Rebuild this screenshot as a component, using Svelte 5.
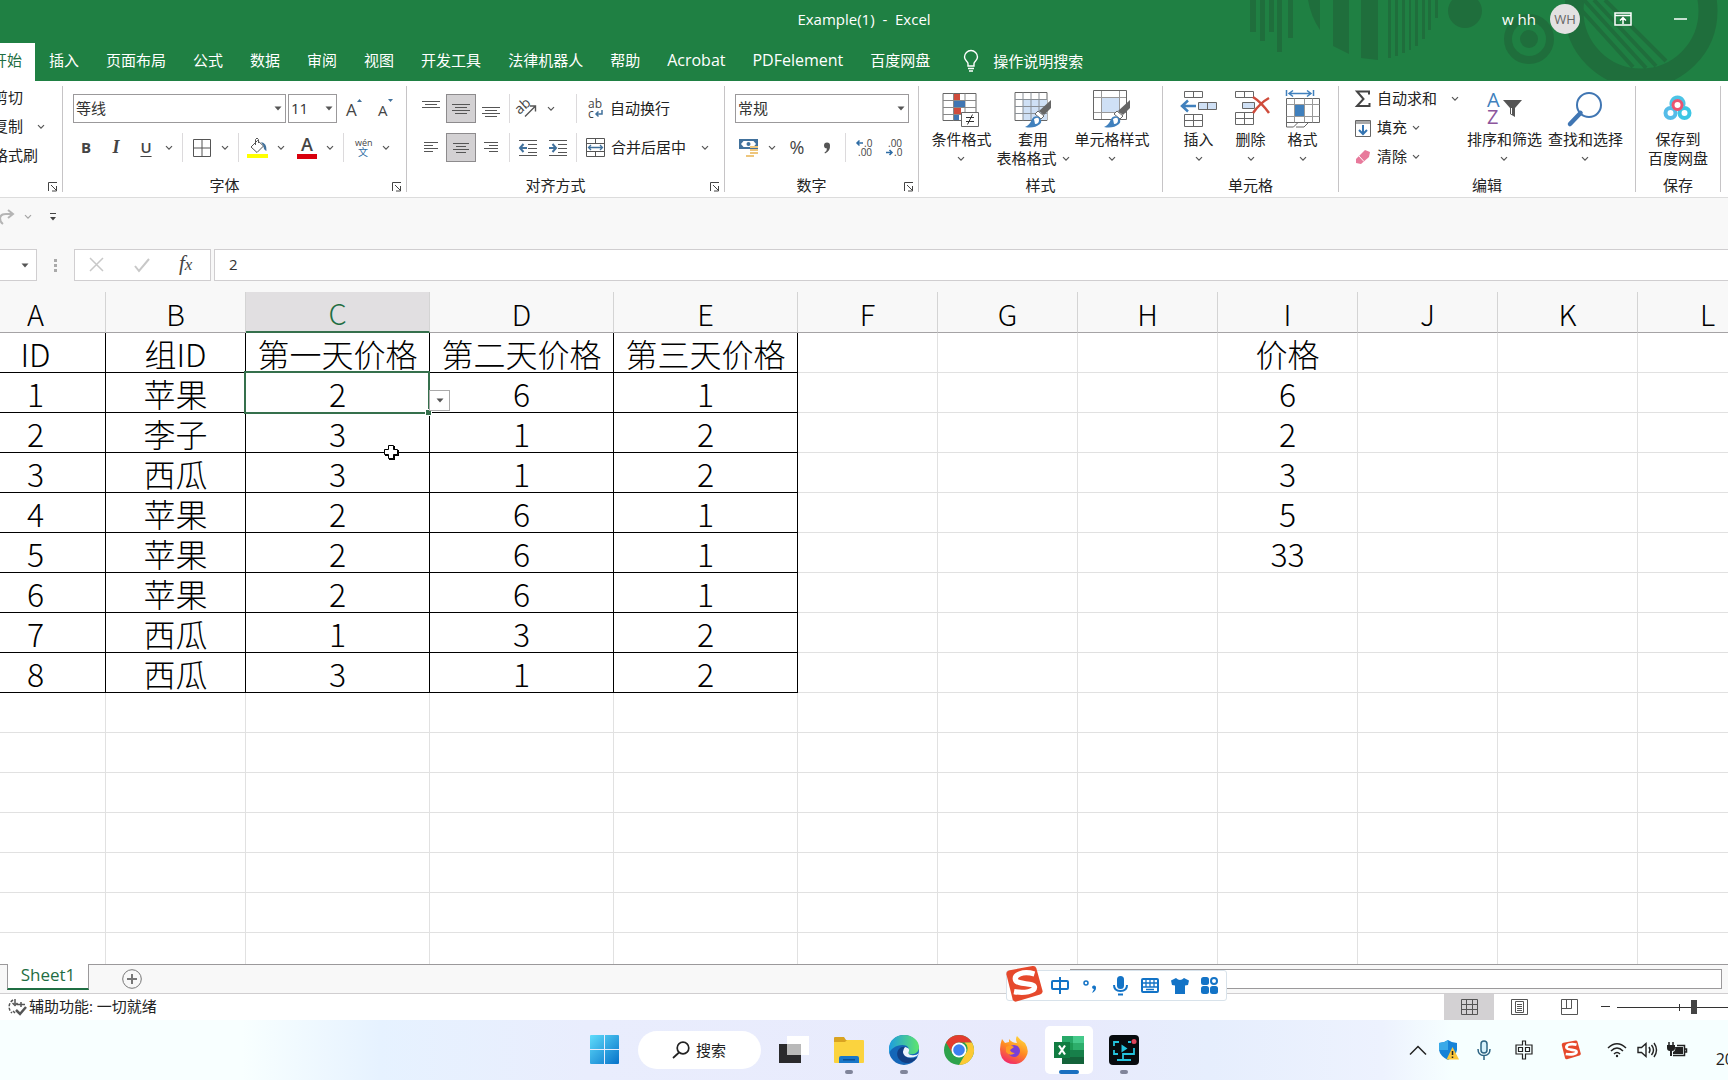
<script>
  const tabs = [
    '开始', '插入', '页面布局', '公式', '数据', '审阅', '视图', '开发工具',
    '法律机器人', '帮助', 'Acrobat', 'PDFelement', '百度网盘'
  ];

  const columns = ['A', 'B', 'C', 'D', 'E', 'F', 'G', 'H', 'I', 'J', 'K', 'L'];

  const data = [
    ['ID', '组ID', '第一天价格', '第二天价格', '第三天价格', '', '', '', '价格'],
    ['1', '苹果', '2', '6', '1', '', '', '', '6'],
    ['2', '李子', '3', '1', '2', '', '', '', '2'],
    ['3', '西瓜', '3', '1', '2', '', '', '', '3'],
    ['4', '苹果', '2', '6', '1', '', '', '', '5'],
    ['5', '苹果', '2', '6', '1', '', '', '', '33'],
    ['6', '苹果', '2', '6', '1'],
    ['7', '西瓜', '1', '3', '2'],
    ['8', '西瓜', '3', '1', '2']
  ];
  const rows = Array.from({ length: 16 }, (_, r) =>
    columns.map((_, c) => data[r]?.[c] ?? '')
  );

  let activeTab = $state('开始');
  let selected = $state({ row: 1, col: 2 });
  let formula = $state('2');
  let zoom = $state(63);

  function select(row, col) {
    selected = { row, col };
    formula = rows[row][col];
  }
</script>

{#snippet chev()}
  <svg class="chev" width="8" height="6" viewBox="0 0 8 6"><path d="M1 1.2l3 3 3-3" fill="none" stroke="#555" stroke-width="1.2" /></svg>
{/snippet}

{#snippet caret()}
  <svg class="caret" width="8" height="5" viewBox="0 0 8 5"><path d="M0.5 0.5h7l-3.5 4z" fill="#555" /></svg>
{/snippet}

{#snippet launcher()}
  <button class="launcher" aria-label="对话框启动器">
    <svg width="10" height="10" viewBox="0 0 10 10"><path d="M0.5 9V0.5H9M3 3l5 5M8.5 4v5H4" fill="none" stroke="#444" /></svg>
  </button>
{/snippet}

{#snippet lines(list)}
  <svg width="18" height="18" viewBox="0 0 18 18" stroke="#555">
    {#each list as [x1, x2, y]}<path d="M{x1} {y}H{x2}" />{/each}
  </svg>
{/snippet}

{#snippet sogou(size)}
  <svg width={size} height={size} viewBox="0 0 40 40">
    <path d="M5 5.500L29 1q3-.5 4 2.500L39.500 27q.5 3-2.500 4L12 38.500q-3 .5-4-2.500L1.500 10q-.5-3.500 3.500-4.500z" fill="#e6492c" />
    <path d="M31 9.500C19 6 9.500 10 11 15.500c1.500 5.500 19 3 20 7.500C32 28 20 30 9.500 28" fill="none" stroke="#fff" stroke-width="5.500" />
  </svg>
{/snippet}

<div class="app">
  <header>
    <svg class="art" width="528" height="80" viewBox="0 0 528 80" fill="#1f6e3c">
      <path d="M50 0h6v32h-6zM60 0h5v41h-5zM69 0h5v32h-5zM77 0h5v52h-5zM88 0h5v38h-5z" />
      <path d="M108 0h12v30q-9-13-12-30zM133 0h16v54l-16-8zM161 0h17v60l-17-2z" />
      <path d="M188 0h3v58h-3zM195 0h3v56h-3zM202 0h3v53h-3zM209 0h2v50h-2zM215 0h3v46h-3zM222 0h3v39h-3zM228 0h3v30h-3zM235 0h3v18h-3z" />
      <circle cx="265" cy="11" r="17" />
      <circle cx="329" cy="39" r="21" fill="none" stroke="#1f6e3c" stroke-width="8" />
      <circle cx="329" cy="39" r="9" />
      <circle cx="441" cy="11" r="67" fill="none" stroke="#1f6e3c" stroke-width="19" />
      <path d="M375 3l58 64M384 0l62 68M394 0l62 66M405 0l61 61" stroke="#1f6e3c" stroke-width="4" />
    </svg>
    <div class="titlebar">
      <span></span>
      <h1>Example(1)&nbsp; -&nbsp; Excel</h1>
      <div class="account">
        <span class="who">w hh</span>
        <span class="avatar">WH</span>
        <button aria-label="功能区显示选项">
          <svg width="18" height="14" viewBox="0 0 18 14" fill="none" stroke="#fff" stroke-width="1.500"><path d="M1 1h16v12H1zM1 3.500h16M9 12V6M6 8.500l3-3 3 3" /></svg>
        </button>
        <button aria-label="最小化">
          <svg width="14" height="14" viewBox="0 0 14 14"><path d="M0 7h13" stroke="#fff" stroke-width="1.500" /></svg>
        </button>
      </div>
    </div>
    <nav class="tabs">
      {#each tabs as t}
        <button class:active={t === activeTab} class:latin={/^[A-Z]/.test(t)} onclick={() => (activeTab = t)}>{t}</button>
      {/each}
      <button class="tell">
        <svg width="16" height="22" viewBox="0 0 16 22" fill="none" stroke="#fff" stroke-width="1.400"><path d="M5 16v-2.500C5 11.500 1.500 10.500 1.500 7a6.500 6.500 0 0 1 13 0c0 3.500-3.500 4.500-3.500 6.500V16zM5 18.500h6M6 21h4" /></svg>
        操作说明搜索
      </button>
    </nav>
  </header>

  <section class="ribbon">
    <div class="group clip">
      <div class="stack">
        <button>剪切</button>
        <button>复制 {@render chev()}</button>
        <button>格式刷</button>
      </div>
      {@render launcher()}
    </div>

    <div class="group font">
      <div class="row inputs">
        <label class="pick wide">
          <select aria-label="字体"><option>等线</option></select>{@render caret()}
        </label>
        <label class="pick small">
          <select aria-label="字号"><option>11</option></select>{@render caret()}
        </label>
        <button class="ib" aria-label="增大字号">
          <svg width="18" height="20" viewBox="0 0 18 20"><text x="1" y="17" font-size="17" fill="#444">A</text><path d="M12 3h5l-2.500-3z" fill="#41719c" /></svg>
        </button>
        <button class="ib" aria-label="减小字号">
          <svg width="18" height="20" viewBox="0 0 18 20"><text x="1" y="17" font-size="15" fill="#444">A</text><path d="M11 0h5l-2.500 3z" fill="#41719c" /></svg>
        </button>
      </div>
      <div class="row">
        <button class="ib b">B</button>
        <button class="ib i">I</button>
        <button class="ib u">U</button>
        <button class="cb" aria-label="下划线选项">{@render chev()}</button>
        <i class="sep"></i>
        <button class="ib" aria-label="边框">
          <svg width="18" height="18" viewBox="0 0 18 18"><path d="M.5.5h17v17H.5zM9 .5v17M.5 9h17" fill="none" stroke="#555" /></svg>
        </button>
        <button class="cb" aria-label="边框选项">{@render chev()}</button>
        <i class="sep"></i>
        <button class="ib" aria-label="填充颜色">
          <svg width="22" height="22" viewBox="0 0 22 22"><path d="M4 10l6.500-6.500L16.500 9 10 15.500zM8.500 8V2.500q1.500-3 3 0V6" fill="#fff" stroke="#555" /><path d="M14 5q6 1 5.500 9-3-1-3-5z" fill="#41719c" /><path d="M0 17h21v4H0z" fill="#ff0" /></svg>
        </button>
        <button class="cb" aria-label="填充颜色选项">{@render chev()}</button>
        <button class="ib gap" aria-label="字体颜色">
          <svg width="20" height="22" viewBox="0 0 20 22"><text x="4" y="14" font-size="18" font-weight="600" fill="#444">A</text><path d="M0 17h20v5H0z" fill="#d9000d" /></svg>
        </button>
        <button class="cb" aria-label="字体颜色选项">{@render chev()}</button>
        <i class="sep"></i>
        <button class="ib" aria-label="拼音指南">
          <svg width="18" height="20" viewBox="0 0 18 20"><text x="1" y="8" font-size="9" fill="#444">wén</text><text x="4" y="18" font-size="10" fill="#2e6ca4">文</text></svg>
        </button>
        <button class="cb" aria-label="拼音选项">{@render chev()}</button>
      </div>
      <span class="name">字体</span>
      {@render launcher()}
    </div>

    <div class="group align">
      <div class="row">
        <button class="ib" aria-label="顶端对齐">{@render lines([[0, 18, 1.5], [3, 15, 4.5], [0, 18, 7.5]])}</button>
        <button class="ib on" aria-label="垂直居中">{@render lines([[0, 18, 4.5], [3, 15, 7.5], [0, 18, 10.5], [3, 15, 13.5]])}</button>
        <button class="ib" aria-label="底端对齐">{@render lines([[0, 18, 7.5], [3, 15, 10.5], [0, 18, 13.5], [3, 15, 16.5]])}</button>
        <i class="sep"></i>
        <button class="ib" aria-label="方向">
          <svg width="20" height="20" viewBox="0 0 20 20"><text x="0" y="12" font-size="14" fill="#444" transform="rotate(-42 6 12)">ab</text><path d="M7 17.500l10-10M12 7h5.500v5.500" fill="none" stroke="#555" stroke-width="1.400" /></svg>
        </button>
        <button class="cb" aria-label="方向选项">{@render chev()}</button>
        <i class="sep far"></i>
        <button class="tb">
          <svg width="18" height="20" viewBox="0 0 18 20"><text x="2" y="9" font-size="12" fill="#444">ab</text><text x="2" y="19" font-size="12" fill="#444">c</text><path d="M16 11v4h-6M12.500 12.500L10 15l2.500 2.500" fill="none" stroke="#41719c" stroke-width="1.500" /></svg>
          自动换行
        </button>
      </div>
      <div class="row">
        <button class="ib" aria-label="左对齐">{@render lines([[2, 16, 3.5], [2, 11, 6.5], [2, 16, 9.5], [2, 11, 12.5]])}</button>
        <button class="ib on" aria-label="居中">{@render lines([[1, 17, 4.5], [4, 14, 7.5], [1, 17, 10.5], [4, 14, 13.5]])}</button>
        <button class="ib" aria-label="右对齐">{@render lines([[2, 16, 3.5], [7, 16, 6.5], [2, 16, 9.5], [7, 16, 12.5]])}</button>
        <i class="sep"></i>
        <button class="ib" aria-label="减少缩进量">
          <svg width="18" height="18" viewBox="0 0 18 18"><path d="M0 1.500h18M9 5.500h9M9 9.500h9M9 13.500h9M0 16.500h18" stroke="#555" /><path d="M8 9H1M4.500 5L1 9l3.500 4" fill="none" stroke="#41719c" stroke-width="2" /></svg>
        </button>
        <button class="ib" aria-label="增加缩进量">
          <svg width="18" height="18" viewBox="0 0 18 18"><path d="M0 1.500h18M9 5.500h9M9 9.500h9M9 13.500h9M0 16.500h18" stroke="#555" /><path d="M0 9h7M3.500 5L7 9l-3.500 4" fill="none" stroke="#41719c" stroke-width="2" /></svg>
        </button>
        <i class="sep"></i>
        <button class="tb">
          <svg width="19" height="19" viewBox="0 0 19 19" fill="none"><path d="M.5.5h18v18H.5zM.5 5.500h18M.5 13.500h18M9.500.5v5M9.500 13.500v5" stroke="#555" /><path d="M2.500 9.500h14M5 7L2.500 9.500 5 12M14 7l2.500 2.500L14 12" stroke="#41719c" stroke-width="1.300" /></svg>
          合并后居中
        </button>
        <button class="cb merge" aria-label="合并选项">{@render chev()}</button>
      </div>
      <span class="name">对齐方式</span>
      {@render launcher()}
    </div>

    <div class="group number">
      <div class="row">
        <label class="pick format">
          <select aria-label="数字格式"><option>常规</option></select>{@render caret()}
        </label>
      </div>
      <div class="row">
        <button class="ib" aria-label="会计数字格式">
          <svg width="20" height="20" viewBox="0 0 20 20"><path d="M0 1h19v10H0z" fill="#41719c" /><path d="M2 6l2.500-3h10L17 6l-2.500 3h-10z" fill="#fff" /><circle cx="9.500" cy="6" r="2" fill="#41719c" /><path d="M11 9h8M11 12h8M11 15h8M7 18h8" stroke="#eec67c" stroke-width="2" /></svg>
        </button>
        <button class="cb" aria-label="会计格式选项">{@render chev()}</button>
        <button class="ib pct">%</button>
        <button class="ib" aria-label="千位分隔">
          <svg width="8" height="12" viewBox="0 0 8 12"><path d="M1 3.500a2.800 2.800 0 0 1 6 0Q7.500 9 2 11.500L1.500 10.500Q4 9 4 6.500 1 6.500 1 3.500z" fill="#555" /></svg>
        </button>
        <i class="sep"></i>
        <button class="ib" aria-label="增加小数位数">
          <svg width="18" height="20" viewBox="0 0 18 20"><text x="9" y="9" font-size="10" fill="#444">.0</text><text x="3" y="18" font-size="10" fill="#444">.00</text><path d="M8 5H2M4.500 2.500L2 5l2.500 2.500" fill="none" stroke="#2e6ca4" stroke-width="1.500" /></svg>
        </button>
        <button class="ib" aria-label="减少小数位数">
          <svg width="18" height="20" viewBox="0 0 18 20"><text x="3" y="9" font-size="10" fill="#444">.00</text><text x="9" y="18" font-size="10" fill="#444">.0</text><path d="M1 14.500h6M4.500 12L7 14.500 4.500 17" fill="none" stroke="#2e6ca4" stroke-width="1.500" /></svg>
        </button>
      </div>
      <span class="name">数字</span>
      {@render launcher()}
    </div>

    <div class="group styles">
      <div class="bigs">
        <button class="big">
          <svg width="38" height="38" viewBox="0 0 38 38"><path d="M1 2.500h33v27H1z" fill="#fff" stroke="#666" /><path d="M1 9.500h33M1 16.500h33M1 23.500h33M11.500 2.500v27M23 2.500v27" stroke="#888" /><path d="M12 3h6v6h-6zM12 17h7v6h-7z" fill="#cf4c3c" /><path d="M12 10h11v6H12zM12 24h5v5h-5z" fill="#4076b3" /><path d="M19.500 21.500h17v14h-17z" fill="#fff" stroke="#666" /><path d="M24 26.500h8M24 30.500h8M30.500 23.500l-5 10" stroke="#333" /></svg>
          <span>条件格式</span>
          {@render chev()}
        </button>
        <button class="big">
          <svg width="38" height="38" viewBox="0 0 38 38"><path d="M1 1.500h32v28H1z" fill="#fff" stroke="#666" /><path d="M9 9h24v20H9z" fill="#cfe0f5" /><path d="M1 8.500h32M1 15.500h32M1 22.500h32M9 1.500v28M17 1.500v28M25 1.500v28" stroke="#8a9097" /><path d="M37 9v8l-7 7-5-4z" fill="#666" /><path d="M24 20l6 5-3 3-6-5z" fill="#fff" stroke="#666" /><path d="M11 36q5-2 7-8 2-4 7-2 4 4 1 7-6 5-15 3z" fill="#4080bd" /><path d="M20 28q5-3 5 1t-4 4z" fill="#fff" /></svg>
          <span>套用</span>
          <span class="line2">表格格式 {@render chev()}</span>
        </button>
        <button class="big">
          <svg width="38" height="38" viewBox="0 0 38 38"><path d="M.5-.5h33v29H.5z" fill="#fff" stroke="#666" /><path d="M1 6.500h32M1 21.500h32M8.500 0v28M26.500 0v28" stroke="#999" /><path d="M9 7h17v14H9z" fill="#cfe0f5" /><path d="M37 9v8l-7 7-5-4z" fill="#666" /><path d="M24 20l6 5-3 3-6-5z" fill="#fff" stroke="#666" /><path d="M11 36q5-2 7-8 2-4 7-2 4 4 1 7-6 5-15 3z" fill="#4080bd" /><path d="M20 28q5-3 5 1t-4 4z" fill="#fff" /></svg>
          <span>单元格样式</span>
          {@render chev()}
        </button>
      </div>
      <span class="name">样式</span>
    </div>

    <div class="group cells">
      <div class="bigs">
        <button class="big">
          <svg width="38" height="38" viewBox="0 0 38 38" fill="#fff" stroke="#666"><path d="M4.500.5h18v6h-18zM13.500.5v6M4.500 23.500h18v12h-18zM4.500 29.500h18M13.500 23.500v12" /><path d="M18.500 11.500h18v7h-18zM27.500 11.500v7" fill="#cfe0f5" /><path d="M2 15h14M8 9.500L2 15l6 5.500" fill="none" stroke="#4080bd" stroke-width="2.500" /></svg>
          <span>插入</span>
          {@render chev()}
        </button>
        <button class="big">
          <svg width="38" height="38" viewBox="0 0 38 38" fill="#fff" stroke="#666"><path d="M3.500.5h18v6h-18zM12.500.5v6M3.500 21.500h18v12h-18zM3.500 27.500h18M12.500 21.500v12" /><path d="M10.500 11.500h12v6h-12z" fill="#cfe0f5" /><path d="M21 6q8 5 16 16M37 7Q28 12 21 22" fill="none" stroke="#cf4c3c" stroke-width="2.500" /></svg>
          <span>删除</span>
          {@render chev()}
        </button>
        <button class="big">
          <svg width="38" height="38" viewBox="0 0 38 38" fill="#fff" stroke="#666"><path d="M2.500 7.500h33v24h-33z" /><path d="M2.500 13.500h33M2.500 25.500h33M10.500 7.500v24M20.500 7.500v24M28.500 7.500v24" stroke="#999" /><path d="M11 14h9v11h-9z" fill="#4080bd" stroke="none" /><path d="M2.500 31v5h7l4-4M12 36h8l4-4" fill="none" /><path d="M2.500-1v6M29.500-1v6M5 2.500h22M9-.5L5 2.500l4 3M23-.5l4 3-4 3" fill="none" stroke="#4080bd" stroke-width="1.500" /></svg>
          <span>格式</span>
          {@render chev()}
        </button>
      </div>
      <span class="name">单元格</span>
    </div>

    <div class="group edit">
      <div class="stack">
        <button class="sum">
          <svg width="16" height="18" viewBox="0 0 16 18"><path d="M14 4.500V1.500H2l6.500 7.500L2 16h12.500v-3" fill="none" stroke="#444" stroke-width="2" /></svg>
          <span>自动求和</span>{@render chev()}
        </button>
        <button>
          <svg width="16" height="18" viewBox="0 0 16 18"><path d="M.5 1.500h15v16H.5z" fill="#fff" stroke="#666" /><path d="M1 2h14v3H1z" fill="#aaa" /><path d="M8 6v9M4 11l4 4 4-4" fill="none" stroke="#3273b1" stroke-width="2" /></svg>
          <span>填充</span>{@render chev()}
        </button>
        <button>
          <svg width="16" height="18" viewBox="0 0 16 18"><path d="M1 11l9-9 5 2-1 5-8 7-5-1z" fill="#e8799b" /><path d="M4 8l5 5.500" stroke="#fff" /></svg>
          <span>清除</span>{@render chev()}
        </button>
      </div>
      <div class="bigs">
        <button class="big">
          <svg width="38" height="38" viewBox="0 0 38 38"><text x="2" y="16" font-size="20" fill="#4080bd">A</text><text x="2" y="33" font-size="20" fill="#8c569c">Z</text><path d="M18 9h19l-7 8v9l-5-3v-6z" fill="#555" /><path d="M26.500 17v6" stroke="#fff" /></svg>
          <span>排序和筛选</span>
          {@render chev()}
        </button>
        <button class="big">
          <svg width="38" height="38" viewBox="0 0 38 38"><circle cx="23" cy="14" r="12" fill="#fff" stroke="#4076b3" stroke-width="2" /><path d="M14.500 22L4 33" stroke="#4076b3" stroke-width="4.500" stroke-linecap="round" /></svg>
          <span>查找和选择</span>
          {@render chev()}
        </button>
      </div>
      <span class="name">编辑</span>
    </div>

    <div class="group save">
      <div class="bigs">
        <button class="big">
          <svg width="38" height="38" viewBox="0 0 38 38" fill="none" stroke-width="4"><circle cx="11.500" cy="22" r="5" stroke="#55bce8" /><circle cx="25.500" cy="22" r="5" stroke="#3cc6e4" /><path d="M13 15a6 6 0 1 1 11 0" stroke="#4cc4e6" /><circle cx="18.500" cy="14" r="4.500" stroke="#ea5470" stroke-width="3" /></svg>
          <span>保存到</span>
          <span>百度网盘</span>
        </button>
      </div>
      <span class="name">保存</span>
    </div>
  </section>

  <div class="quick">
    <button aria-label="恢复"><svg width="14" height="16" viewBox="0 0 14 16" fill="none" stroke="#b5b5b5" stroke-width="2"><path d="M0 10q0-5 6-5h6M8 1l5 4-5 4M0 9q0 4 3 6" /></svg></button>
    <span class="dim">{@render chev()}</span>
    <button aria-label="自定义快速访问工具栏"><svg width="8" height="8" viewBox="0 0 8 8"><path d="M1 .5h6" stroke="#444" /><path d="M1 4h6L4 7.500z" fill="#444" /></svg></button>
  </div>

  <div class="formula">
    <button class="namebox" aria-label="名称框">{@render caret()}</button>
    <span class="dots"></span>
    <div class="fxbox">
      <button aria-label="取消"><svg width="16" height="16" viewBox="0 0 16 16"><path d="M1 1l13 13M14 1L1 14" stroke="#c8c8c8" stroke-width="1.500" /></svg></button>
      <button aria-label="输入"><svg width="16" height="16" viewBox="0 0 16 16"><path d="M1 9l4 5L15 2" fill="none" stroke="#c8c8c8" stroke-width="2" /></svg></button>
      <button class="fx">f<small>x</small></button>
    </div>
    <input aria-label="编辑栏" bind:value={formula} />
  </div>

  <main>
    <table>
      <colgroup>
        {#each columns as c}
          <col class:price={c === 'C' || c === 'D' || c === 'E'} />
        {/each}
      </colgroup>
      <thead>
        <tr>
          {#each columns as c, i}
            <th class:on={i === selected.col}>{c}</th>
          {/each}
        </tr>
      </thead>
      <tbody>
        {#each rows as row, r}
          <tr>
            {#each row as value, c}
              <td class:boxed={r < 9 && c < 5} onclick={() => select(r, c)}>
                {value}
                {#if r === selected.row && c === selected.col}
                  <span class="ring"></span>
                  <button class="drop" aria-label="下拉列表">{@render caret()}</button>
                {/if}
              </td>
            {/each}
          </tr>
        {/each}
      </tbody>
    </table>
    <svg class="cursor" width="16" height="17" viewBox="0 0 16 17"><path d="M6 2h6v4h4v6h-4v4H6v-4H2V6h4z" fill="#000" /><path d="M5.500 1.500h5v4h4v5h-4v4h-5v-4h-4v-5h4z" fill="#fff" stroke="#000" /></svg>
  </main>

  <div class="sheets">
    <button class="sheet">Sheet1</button>
    <button class="add" aria-label="新工作表"><svg width="20" height="20" viewBox="0 0 20 20" fill="none" stroke="#777"><circle cx="10" cy="10" r="9.300" /><path d="M10 5v10M5 10h10" stroke-width="2" /></svg></button>
    <div class="scroll"></div>
  </div>

  <div class="status">
    <svg width="20" height="20" viewBox="0 0 20 20" fill="none" stroke="#555" stroke-width="1.500"><path d="M6 3a8 8 0 0 0-1 13" stroke-dasharray="3 1.500" /><path d="M8 2v5M5.500 6L8 8.500 10.500 6M10 7.500h8M14 5v5M8 16l-2-2" /><path d="M9 13l4 4 6-7" stroke-width="2.500" /></svg>
    <span>辅助功能: 一切就绪</span>
    <div class="views">
      <button class="on" aria-label="普通"><svg width="17" height="16" viewBox="0 0 17 16"><path d="M.5.5h16v15H.5zM.5 5.500h16M.5 10.500h16M5.500.5v15M11.500.5v15" fill="none" stroke="#555" /></svg></button>
      <button aria-label="页面布局"><svg width="17" height="16" viewBox="0 0 17 16"><path d="M.5.5h16v15H.5zM4.500 2.500h8v11h-8zM6 5.500h5M6 7.500h5M6 9.500h5M6 11.500h5" fill="none" stroke="#555" /></svg></button>
      <button aria-label="分页预览"><svg width="17" height="16" viewBox="0 0 17 16"><path d="M.5.5h16v15H.5zM5.500.5v9M.5 9.500h10V.5" fill="none" stroke="#555" /></svg></button>
      <button class="minus" aria-label="缩小"><svg width="10" height="10" viewBox="0 0 10 10"><path d="M0 4.500h9" stroke="#333" /></svg></button>
      <input type="range" aria-label="显示比例" bind:value={zoom} />
    </div>
  </div>

  <footer>
    <span></span>
    <div class="dock">
      <button aria-label="开始"><svg width="30" height="30" viewBox="0 0 30 30"><defs><linearGradient id="win" x2="1" y2="1"><stop stop-color="#5fdcfb" /><stop offset="1" stop-color="#0672c9" /></linearGradient></defs><path d="M1 0h13v14H0V1q0-1 1-1zM15 0h13q1 0 1 1v13H15zM0 15h14v14H1q-1 0-1-1zM15 15h14v13q0 1-1 1H15z" fill="url(#win)" /></svg></button>
      <button class="search">
        <svg width="18" height="18" viewBox="0 0 18 18" fill="none" stroke="#222" stroke-width="1.700"><circle cx="11" cy="7" r="5.800" /><path d="M7 11.500L1 17" /></svg>
        搜索
      </button>
      <div class="apps">
        <button aria-label="任务视图"><svg width="30" height="30" viewBox="0 0 30 30"><path d="M0 9h22v19H0z" fill="#2a2a2c" /><path d="M8 1h22v19H8z" fill="#fff" /><path d="M8 9h14v11H8z" fill="#b9b9b9" /></svg></button>
        <button class="run" aria-label="文件资源管理器"><svg width="30" height="30" viewBox="0 0 30 30"><path d="M0 3q0-1 1-1h9l2 3h17v8H0z" fill="#d9a321" /><path d="M0 7h11l2-2h16q1 0 1 1v21q0 1-1 1H1q-1 0-1-1z" fill="#fbd33e" /><path d="M5 28v-5q0-2 2-2h16q2 0 2 2v5z" fill="#1877c9" /><path d="M9 24h12v1.500H9z" fill="#0b4f92" /></svg></button>
        <button class="run" aria-label="Edge"><svg width="30" height="30" viewBox="0 0 30 30"><defs><linearGradient id="edge" x2="1"><stop stop-color="#1d9ce0" /><stop offset="1" stop-color="#5ee56d" /></linearGradient></defs><circle cx="15" cy="15" r="15" fill="#1466b8" /><path d="M0 14C0 5 7 0 15 0c9 0 15 6 15 12 0 5-4 8-9 7-3-.5-3-2-1.500-3 1-3-1-6-6-6C7 10 1 14 0 19z" fill="url(#edge)" /><path d="M10 14c-5 6 1 15 10 14 4-1 7-3 8.500-6-5 3-14 1-14-5 0-2 1-4 2-5q-4-1-6.500 2z" fill="#123f84" /><path d="M16 12q-4 5 0 9 5 3 12 0l2-3q-3 3-8 2-4-1-2-4 1-3-4-4z" fill="#eef4ff" /></svg></button>
        <button aria-label="Chrome"><svg width="30" height="30" viewBox="0 0 30 30"><circle cx="15" cy="15" r="15" fill="#2da24c" /><path d="M2 7.500A15 15 0 0 1 28 7.500H15a7.500 7.500 0 0 0-6.500 11z" fill="#e33b2e" /><path d="M28 7.500A15 15 0 0 1 15 30l6.500-11.200a7.500 7.500 0 0 0-1-11.300z" fill="#fcc934" /><circle cx="15" cy="15" r="7.500" fill="#fff" /><circle cx="15" cy="15" r="5.800" fill="#3d7ff0" /></svg></button>
        <button aria-label="Firefox"><svg width="30" height="30" viewBox="0 0 30 30"><defs><linearGradient id="fox" x1=".8" y1="0" x2=".3" y2="1"><stop stop-color="#ffdc3e" /><stop offset=".5" stop-color="#ff8a22" /><stop offset="1" stop-color="#f1266b" /></linearGradient></defs><path d="M3 4l3 4 4-1V4q3 4 8 4-2-4 0-7 3 4 8 7 5 8 1 14-4 7-12 7T3 23Q-1 15 3 4z" fill="url(#fox)" /><circle cx="15" cy="16" r="6" fill="#7a3fd6" /><path d="M7 12q4-3 8 0l-4 3q1 3 5 3-5 4-9-1z" fill="#ff9a25" /></svg></button>
        <button class="run current" aria-label="Excel"><svg width="30" height="30" viewBox="0 0 30 30"><path d="M8 1h22v28H8z" fill="#1d9a55" /><path d="M19 1h11v7H19z" fill="#45c98a" /><path d="M8 1h11v7H8z" fill="#27a868" /><path d="M19 8h11v7H19z" fill="#2dae6b" /><path d="M8 15h22v7H8z" fill="#17804a" /><path d="M8 22h22v7H8z" fill="#14633a" /><path d="M0 7h16v16H0z" fill="#107c41" /><path d="M5 10.500l6 9M11 10.500l-6 9" stroke="#fff" stroke-width="2.200" /></svg></button>
        <button class="run" aria-label="录屏"><svg width="30" height="30" viewBox="0 0 30 30" fill="none" stroke="#25c3dd" stroke-width="1.800"><rect width="30" height="30" rx="4" fill="#070b0e" stroke="none" /><path d="M5 11V7h5M5 15v4h4M19 7h3M25 13v6H14v6M8 25h14" /><path d="M12.500 9.500l6 4-6 4z" fill="#25c3dd" stroke="none" /><circle cx="25" cy="6.500" r="2.500" fill="#e0445a" stroke="none" /></svg></button>
      </div>
    </div>
    <div class="tray">
      <svg width="18" height="12" viewBox="0 0 18 12"><path d="M1 10.500l8-8 8 8" fill="none" stroke="#222" stroke-width="1.500" /></svg>
      <svg width="20" height="20" viewBox="0 0 20 20"><path d="M9 0q4 3 9 3v7q-1 6-9 10-8-4-9-10V3q5 0 9-3z" fill="#1683d8" /><path d="M9 0v10H0V3q5 0 9-3z" fill="#39a9e8" /><path d="M13.500 7l6.500 12.500H7.500z" fill="#fbc63a" /><path d="M13.500 11v4M13.500 16.500v1.500" stroke="#222" stroke-width="1.500" /></svg>
      <svg width="14" height="20" viewBox="0 0 14 20" fill="none" stroke="#2e6584" stroke-width="1.500"><rect x="4" y="1" width="6" height="12" rx="3" fill="#d6f1fb" /><path d="M1 9q0 6.500 6 6.500T13 9M7 15.500V20" /></svg>
      <svg class="zh" width="18" height="20" viewBox="0 0 18 20" fill="none" stroke="#222" stroke-width="1.200"><path d="M7.500 1h3v4H17v9h-6.500v5h-3v-5H1V5h6.500zM3.500 7.500h4v4h-4zM10.500 7.500h4v4h-4z" /></svg>
      <span class="sg">{@render sogou(20)}</span>
      <span class="net">
        <svg width="20" height="16" viewBox="0 0 20 16" fill="none" stroke="#222" stroke-width="1.500"><path d="M1 6q9-8.500 18 0M4 9q6-6 12 0M7 12q3-3 6 0" /><circle cx="10" cy="14" r="1.200" fill="#222" stroke="none" /></svg>
        <svg width="20" height="16" viewBox="0 0 20 16" fill="none" stroke="#222" stroke-width="1.400"><path d="M1 5.500h3.500L9 1.500v13l-4.500-4H1zM12 5q2 3 0 6M14.500 3q4 5 0 10M17 1q5 7 0 14" /></svg>
        <svg width="20" height="16" viewBox="0 0 20 16"><path d="M2 0v3M6 0v3" stroke="#222" stroke-width="1.500" /><path d="M0 3h8v3q0 3-3 3v5H3V9Q0 9 0 6zM8 5h8v7H6v-2q3-1 2-5z" fill="#222" /><path d="M10 3.500h7.500v10H6M18 7h1.500v3H18" fill="none" stroke="#222" stroke-width="1.500" /></svg>
      </span>
      <span class="date">20</span>
    </div>
  </footer>

  <div class="ime">
    <span class="logo">{@render sogou(38)}</span>
    <svg width="18" height="18" viewBox="0 0 18 18" fill="none" stroke="#1373c6" stroke-width="2"><rect x="1" y="4" width="16" height="8" rx="1" /><path d="M9 0v17" /></svg>
    <svg width="18" height="18" viewBox="0 0 18 18"><circle cx="5" cy="6" r="2" fill="none" stroke="#1373c6" stroke-width="1.500" /><path d="M11 10a2 2 0 1 1 4 1q0 3-4 5l2-4q-2 0-2-2z" fill="#1373c6" /></svg>
    <svg width="18" height="20" viewBox="0 0 18 20"><rect x="6" y="0" width="7" height="13" rx="3.500" fill="#1373c6" /><path d="M3 9q0 6 6.500 6T16 9M7 18.500h5" fill="none" stroke="#1373c6" stroke-width="2" /></svg>
    <svg width="18" height="18" viewBox="0 0 18 18" fill="none" stroke="#1373c6"><rect x="1" y="2" width="16" height="13" rx="1" stroke-width="2" /><path d="M1 6h16M1 10h16M5 2v8M9 2v8M13 2v8M5 12.500h8" stroke-width="1.300" /></svg>
    <svg width="18" height="18" viewBox="0 0 18 18"><path d="M5 1q4 4 8 0l5 2.500-1 4.500-3 .5V17H4V8.500L1 8 0 3.500z" fill="#1373c6" /></svg>
    <svg width="18" height="18" viewBox="0 0 18 18" fill="#1373c6"><rect width="8" height="8" rx="2.500" /><rect y="9" width="8" height="8" rx="2.500" /><rect x="9" y="9" width="8" height="8" rx="2.500" /><circle cx="13" cy="4" r="3" fill="#fff" stroke="#1373c6" stroke-width="2" /></svg>
  </div>
</div>

<style>
  :global(body) {
    margin: 0;
  }
  .app {
    position: relative;
    display: flex;
    flex-direction: column;
    height: 100vh;
    overflow: hidden;
    background: #f8f8f8;
    color: #222;
    font-family: "Open Sans", "Noto Sans CJK SC", sans-serif;
    font-size: 15px;
    line-height: 19px;
  }
  button {
    padding: 0;
    border: 0;
    background: none;
    color: inherit;
    font: inherit;
    white-space: nowrap;
  }
  svg {
    display: block;
    flex: none;
    overflow: visible;
  }

  /* title bar */
  header {
    position: relative;
    background: #1f8043;
    color: #fff;
  }
  .art {
    position: absolute;
    top: 0;
    right: 0;
    overflow: hidden;
  }
  .titlebar {
    position: relative;
    display: grid;
    grid-template-columns: 1fr auto 1fr;
    align-items: center;
    height: 43px;
  }
  h1 {
    margin: 0;
    padding-bottom: 4px;
    font-size: 15px;
    font-weight: 400;
  }
  .account {
    display: flex;
    align-items: center;
    justify-content: flex-end;
    height: 38px;
    padding-right: 40px;
    margin-bottom: 5px;
    font-size: 15px;
  }
  .avatar {
    width: 30px;
    margin: 0 34px 0 14px;
    border-radius: 50%;
    background: #e3e1e2;
    color: #666;
    font-size: 13px;
    line-height: 30px;
    text-align: center;
  }
  .account button + button {
    margin-left: 42px;
  }
  .tabs {
    position: relative;
    display: flex;
    height: 38px;
    margin-left: -22px;
  }
  .tabs button {
    padding: 0 13px 4px 14px;
  }
  .tabs .active {
    background: #fff;
    color: #1f6e43;
  }
  .tabs .latin {
    font-size: 16px;
  }
  .tabs .tell {
    display: flex;
    align-items: center;
    gap: 14px;
    padding: 0 13px 2px 20px;
  }

  /* ribbon */
  .ribbon {
    display: flex;
    height: 116px;
    flex: none;
    background: #fff;
    border-bottom: 1px solid #dcdcdc;
  }
  .group {
    position: relative;
    box-sizing: border-box;
    flex: none;
    height: 106px;
    margin-top: 5px;
    padding-top: 8px;
    border-right: 1px solid #c6c4c6;
  }
  .name {
    position: absolute;
    right: 0;
    bottom: -3px;
    left: 0;
    text-align: center;
    pointer-events: none;
  }
  .font .name,
  .align .name,
  .number .name {
    right: 20px;
  }
  .launcher {
    position: absolute;
    right: 4px;
    bottom: 0;
  }
  .clip { width: 63px; }
  .font { width: 344px; padding-left: 8px; }
  .align { width: 318px; padding-left: 9px; }
  .number { width: 194px; padding-left: 9px; }
  .styles { width: 244px; }
  .cells { width: 176px; }
  .edit { width: 297px; }
  .save { width: 85px; }
  .row {
    display: flex;
    align-items: center;
    height: 29px;
    margin-bottom: 10px;
  }
  .inputs {
    gap: 2px;
    padding-left: 2px;
  }
  .pick {
    position: relative;
  }
  .pick select {
    width: 100%;
    height: 29px;
    padding: 0 2px;
    border: 1px solid #9b999b;
    border-radius: 0;
    background: #fff;
    color: #333;
    font: inherit;
    appearance: none;
  }
  .pick :global(.caret) {
    position: absolute;
    top: 12px;
    right: 4px;
  }
  .wide { width: 213px; }
  .small { width: 49px; }
  .format { width: 174px; margin-left: 1px; }
  .ib,
  .cb {
    display: flex;
    align-items: center;
    justify-content: center;
    box-sizing: border-box;
    flex: none;
    width: 30px;
    height: 29px;
    color: #444;
  }
  .cb {
    width: 16px;
  }
  .ib.on {
    background: #d3d1d3;
    border: 1px solid #8d8b8d;
  }
  .b { font-weight: 700; }
  .i {
    font-family: "Liberation Serif", serif;
    font-size: 18px;
    font-style: italic;
    font-weight: 700;
  }
  .u {
    font-weight: 600;
    text-decoration: underline;
    text-underline-offset: 3px;
  }
  .pct { font-size: 18px; margin-left: 2px; }
  .gap { margin-left: 3px; }
  .sep {
    flex: none;
    width: 1px;
    height: 29px;
    margin: 0 4px 0 5px;
    background: #dcdadc;
  }
  .align .sep,
  .number .sep {
    margin: 0 3px;
  }
  .align .far {
    margin-left: 17px;
  }
  .tb {
    display: flex;
    align-items: center;
    gap: 6px;
    padding-left: 6px;
  }
  .merge {
    margin-left: 11px;
  }
  .stack {
    display: flex;
    flex-direction: column;
    gap: 10px;
    align-items: flex-start;
  }
  .clip .stack {
    margin: -6px 0 0 -7px;
  }
  .clip .stack button {
    display: flex;
    align-items: center;
    gap: 14px;
  }
  .bigs {
    display: flex;
    justify-content: center;
  }
  .big {
    display: flex;
    flex-direction: column;
    align-items: center;
    padding: 0 6px;
  }
  .big > svg:first-child {
    margin: -3px 0 1px;
  }
  .big :global(.chev) {
    margin-top: 7px;
  }
  .line2 {
    display: flex;
    gap: 5px;
  }
  .styles .bigs { gap: 5px; }
  .styles .big { padding: 0; }
  .cells .big { width: 52px; }
  .edit {
    display: flex;
    justify-content: space-between;
    padding: 8px 9px 0 16px;
  }
  .edit .stack {
    margin-top: -5px;
  }
  .edit .stack button {
    display: flex;
    align-items: center;
    gap: 6px;
  }
  .edit .stack span + :global(.chev) {
    margin-left: -1px;
  }
  .edit .sum span + :global(.chev) {
    margin-left: 8px;
  }
  .edit .big { padding: 0 3px; }

  /* quick access and formula bar */
  .quick {
    display: flex;
    align-items: center;
    flex: none;
    height: 38px;
    margin-bottom: 13px;
  }
  .dim {
    margin: 0 17px 0 10px;
    opacity: 0.5;
  }
  .formula {
    display: flex;
    flex: none;
    height: 32px;
    margin-bottom: 11px;
  }
  .namebox,
  .fxbox,
  .formula input {
    box-sizing: border-box;
    border: 1px solid #d0ced0;
    background: #fff;
  }
  .namebox {
    display: flex;
    align-items: center;
    justify-content: flex-end;
    width: 37px;
    padding-right: 7px;
    border-left: 0;
  }
  .dots {
    align-self: center;
    width: 3px;
    height: 13px;
    margin: 0 17px;
    background: repeating-linear-gradient(#aaa 0 3px, transparent 3px 5px);
  }
  .fxbox {
    display: flex;
    align-items: center;
    gap: 29px;
    width: 137px;
    margin-right: 3px;
    padding-left: 14px;
  }
  .fx {
    padding-bottom: 2px;
    color: #444;
    font-family: "Liberation Serif", serif;
    font-size: 21px;
    font-style: italic;
  }
  .fx small {
    font-size: 17px;
  }
  .formula input {
    flex: 1;
    min-width: 0;
    padding: 0 14px 2px;
    border-right: 0;
    color: #333;
    font: inherit;
  }

  /* grid */
  main {
    position: relative;
    flex: 1;
    min-height: 0;
    overflow: hidden;
    background: #fff;
  }
  table {
    width: 1812px;
    margin-left: -34px;
    border-collapse: separate;
    border-spacing: 0;
    table-layout: fixed;
    color: #000;
    font-family: "Noto Sans CJK SC", sans-serif;
    font-size: 32px;
    font-weight: 300;
    line-height: 38px;
    text-align: center;
  }
  col { width: 140px; }
  col.price { width: 184px; }
  th,
  td {
    position: relative;
    box-sizing: border-box;
    height: 40px;
    padding: 0;
    border: 0 solid #e1e1e1;
    border-width: 0 1px 1px 0;
    white-space: nowrap;
  }
  th {
    padding-top: 1px;
    border-right-color: #d4d4d4;
    border-bottom-color: #a5a3a5;
    background: #f8f8f8;
    font-size: 29px;
    font-weight: 300;
  }
  th.on {
    border-bottom: 2px solid #35704c;
    background: #e1dfe1;
    color: #1f6e43;
  }
  td.boxed {
    border-color: #000;
  }
  .ring {
    position: absolute;
    z-index: 1;
    inset: -2px -1px -2px -2px;
    border: 2px solid #35704c;
  }
  .ring::after {
    position: absolute;
    right: -3px;
    bottom: -3px;
    width: 5px;
    height: 5px;
    background: #35704c;
    outline: 1px solid #fff;
    content: "";
  }
  .drop {
    position: absolute;
    z-index: 1;
    top: 17px;
    left: 100%;
    display: flex;
    align-items: center;
    justify-content: center;
    width: 21px;
    height: 21px;
    border: 1px solid #aaa;
    background: #fff;
  }
  .cursor {
    position: absolute;
    top: 152px;
    left: 383px;
  }

  /* sheet tabs and status bar */
  .sheets {
    display: flex;
    align-items: flex-start;
    flex: none;
    box-sizing: border-box;
    height: 30px;
    border-top: 1px solid #9b999b;
    border-bottom: 1px solid #d0ced0;
  }
  .sheet {
    box-sizing: border-box;
    width: 82px;
    height: 26px;
    margin: -1px 33px 0 7px;
    padding-bottom: 3px;
    border: 1px solid #9b999b;
    border-width: 0 1px 2px;
    border-bottom-color: #1f6e43;
    background: #fff;
    color: #1f6e43;
    font-size: 17px;
  }
  .add {
    margin-top: 4px;
  }
  .scroll {
    box-sizing: border-box;
    width: 652px;
    height: 20px;
    margin: 4px 6px 0 auto;
    border: 1px solid #9b999b;
    background: #fff;
  }
  .status {
    display: flex;
    align-items: center;
    flex: none;
    height: 26px;
    padding-left: 7px;
    gap: 2px;
    background: #fff;
  }
  .status > span {
    padding-bottom: 2px;
  }
  .views {
    display: flex;
    height: 26px;
    margin: 0 -13px 0 auto;
  }
  .views button {
    display: flex;
    align-items: center;
    justify-content: center;
    width: 50px;
  }
  .views .on {
    background: #d3d1d3;
  }
  .views .minus {
    width: 23px;
  }
  input[type="range"] {
    width: 124px;
    margin: 0;
    appearance: none;
    background:
      linear-gradient(#333, #333) 50% 50% / 1px 7px no-repeat,
      linear-gradient(#333, #333) 0 50% / 100% 1px no-repeat;
  }
  input[type="range"]::-webkit-slider-thumb {
    width: 6px;
    height: 14px;
    appearance: none;
    background: #444;
  }

  /* taskbar */
  footer {
    display: grid;
    grid-template-columns: 1fr auto 1fr;
    align-items: center;
    flex: none;
    height: 60px;
    background: linear-gradient(90deg, #f8ffff 14%, #e6f2ff 22%, #e9edfd 34%, #e8eafc 62%, #e6eefd 70%, #edf2fe 80%, #f6ffff 84%);
  }
  .dock,
  .apps,
  .tray,
  .net {
    display: flex;
    align-items: center;
  }
  .dock { gap: 18px; }
  .apps { gap: 25px; }
  .search {
    display: flex;
    align-items: center;
    justify-content: center;
    gap: 6px;
    width: 123px;
    height: 38px;
    border-radius: 19px;
    background: #fff;
  }
  .apps button {
    position: relative;
  }
  .run::after {
    position: absolute;
    bottom: -9px;
    left: 11px;
    width: 8px;
    height: 4px;
    border-radius: 2px;
    background: #80859a;
    content: "";
  }
  .current {
    margin: 0 -9px;
    padding: 9px;
    border-radius: 5px;
    background: #fff;
  }
  .current::after {
    bottom: 0;
    left: 14px;
    width: 20px;
    background: #1a70c0;
  }
  .tray {
    justify-content: flex-end;
    gap: 18px;
    margin-right: -6px;
  }
  .tray > svg:first-child { margin-right: -6px; }
  .zh { margin-left: 6px; }
  .sg { margin: 0 8px 0 10px; }
  .net {
    gap: 10px;
    margin-right: 11px;
  }
  .date {
    padding-top: 19px;
    font-size: 16px;
  }

  /* floating input method bar */
  .ime {
    position: absolute;
    right: 501px;
    bottom: 79px;
    display: flex;
    align-items: center;
    gap: 12px;
    box-sizing: border-box;
    height: 31px;
    padding-right: 7px;
    border: 1px solid #d8e2ea;
    border-radius: 3px;
    background: #fff;
  }
  .logo {
    margin: -4px -4px 0 -2px;
  }
</style>
